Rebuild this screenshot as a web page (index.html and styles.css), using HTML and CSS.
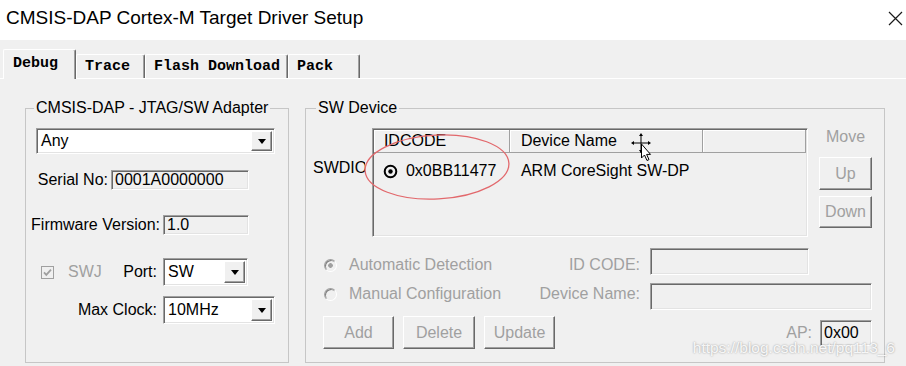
FILE: index.html
```html
<!DOCTYPE html>
<html lang="en">
<head>
    <meta charset="UTF-8">
    <meta name="viewport" content="width=device-width, initial-scale=1.0">
    <title>CMSIS-DAP Cortex-M Target Driver Setup</title>
    <link rel="stylesheet" href="styles.css">
</head>
<body>
    <div class="window">
        <div class="titlebar">
            <span class="title">CMSIS-DAP Cortex-M Target Driver Setup</span>
            <svg class="close" width="15" height="15" viewBox="0 0 15 15"><path d="M1 1 L14 14 M14 1 L1 14" stroke="#1a1a1a" stroke-width="1.2"/></svg>
        </div>

        <div class="tabs">
            <div class="tab tab-debug active">Debug</div>
            <div class="tab tab-trace">Trace</div>
            <div class="tab tab-flash">Flash Download</div>
            <div class="tab tab-pack">Pack</div>
        </div>

        <div class="panel">
            <fieldset class="group group-adapter">
                <legend>CMSIS-DAP - JTAG/SW Adapter</legend>
                <div class="combo combo-any"><span class="combo-value">Any</span><span class="combo-btn"></span></div>
                <div class="field-row serial-row">
                    <span class="field-label">Serial No:</span>
                    <div class="edit edit-serial">0001A0000000</div>
                </div>
                <div class="field-row firmware-row">
                    <span class="field-label">Firmware Version:</span>
                    <div class="edit edit-firmware">1.0</div>
                </div>
                <div class="port-grid">
                    <div class="port-label">
                        <svg class="check" width="13" height="13" viewBox="0 0 13 13"><rect x="0.5" y="0.5" width="12" height="12" fill="#f0f0f0" stroke="#a0a0a0"/><path d="M3 6.3 L5.3 8.8 L10 3.6" fill="none" stroke="#a0a0a0" stroke-width="1.8"/></svg>
                        <span class="disabled swj">SWJ</span>
                        <span class="port-text">Port:</span>
                    </div>
                    <div class="combo combo-port"><span class="combo-value">SW</span><span class="combo-btn"></span></div>
                    <div class="clock-label">Max Clock:</div>
                    <div class="combo combo-clock"><span class="combo-value">10MHz</span><span class="combo-btn"></span></div>
                </div>
            </fieldset>

            <fieldset class="group group-device">
                <legend>SW Device</legend>
                <div class="device-top">
                    <div class="swdio">SWDIO</div>
                    <div class="listview">
                        <div class="lv-header">
                            <div class="lv-col w-id">IDCODE</div>
                            <div class="lv-col w-name">Device Name</div>
                            <div class="lv-col w-rest"></div>
                        </div>
                        <div class="lv-row">
                            <div class="lv-cell w-id">
                                <svg width="15" height="15" viewBox="0 0 15 15"><circle cx="7.5" cy="7.5" r="5.8" fill="none" stroke="#000" stroke-width="2"/><circle cx="7.5" cy="7.5" r="2.2" fill="#000"/></svg>
                                <span>0x0BB11477</span>
                            </div>
                            <div class="lv-cell w-name">ARM CoreSight SW-DP</div>
                        </div>
                        <svg class="mark" width="152" height="72" viewBox="0 0 152 72"><ellipse cx="76" cy="36" rx="72" ry="32" transform="rotate(-3 76 36)" fill="none" stroke="#e2686c" stroke-width="1.3"/></svg>
                        <svg class="cursor" width="24" height="32" viewBox="0 0 24 32">
                            <path d="M10 2 V20 M2 10 H18" stroke="#000" stroke-width="1"/>
                            <path d="M10 0 L8 3 H12 Z M10 20 L8 17 H12 Z M0 10 L3 8 V12 Z M20 10 L17 8 V12 Z" fill="#000"/>
                            <path d="M10.5 11 L10.5 25 L13.5 22 L16 27.5 L18 26.6 L15.6 21.4 L19.5 21.4 Z" fill="#fff" stroke="#000" stroke-width="1"/>
                        </svg>
                    </div>
                    <div class="move-col">
                        <div class="disabled move-label">Move</div>
                        <div class="btn btn-up">Up</div>
                        <div class="btn btn-down">Down</div>
                    </div>
                </div>

                <div class="detect-row detect-auto">
                    <div class="detect-left">
                        <span class="radio checked"></span>
                        <span class="disabled">Automatic Detection</span>
                        <span class="disabled detect-label">ID CODE:</span>
                    </div>
                    <div class="edit edit-idcode"></div>
                </div>
                <div class="detect-row detect-manual">
                    <div class="detect-left">
                        <span class="radio"></span>
                        <span class="disabled">Manual Configuration</span>
                        <span class="disabled detect-label">Device Name:</span>
                    </div>
                    <div class="edit edit-devname"></div>
                </div>

                <div class="button-row">
                    <div class="btn btn-add">Add</div>
                    <div class="btn btn-delete">Delete</div>
                    <div class="btn btn-update">Update</div>
                    <div class="ap">
                        <span class="disabled">AP:</span>
                        <div class="edit edit-ap">0x00</div>
                    </div>
                </div>
            </fieldset>
        </div>

        <div class="watermark">https://blog.csdn.net/pq113_6</div>
    </div>
</body>
</html>
```

FILE: styles.css
```css
body {
    margin: 0;
    font-family: "Liberation Sans", Arial, sans-serif;
    font-size: 16px;
    line-height: 18px;
    background-color: #f0f0f0;
    color: #000;
}

.window {
    position: relative;
    width: 906px;
    height: 366px;
    overflow: hidden;
}

/* title bar */
.titlebar {
    height: 40px;
    box-sizing: border-box;
    background-color: #fff;
    display: flex;
    align-items: center;
    justify-content: space-between;
    padding: 0 3px 4px 6px;
}

.title {
    font-size: 19px;
    line-height: 22px;
}

/* tabs */
.tabs {
    display: flex;
    align-items: flex-end;
    height: 38px;
    padding-left: 3px;
    font-family: "Liberation Mono", "Courier New", monospace;
    font-weight: bold;
    font-size: 15px;
    line-height: 17px;
}

.tab {
    height: 24px;
    box-sizing: border-box;
    padding: 3px 0 0 8px;
    border-top: 1px solid #fff;
    border-left: 1px solid #fff;
    border-right: 1px solid #696969;
    box-shadow: inset -1px 0 #a0a0a0;
    border-radius: 2px 2px 0 0;
}

.tab.active {
    height: 30px;
    padding: 5px 0 0 9px;
    margin-bottom: -1px;
    background-color: #f0f0f0;
    position: relative;
    z-index: 1;
}

.tab-debug { width: 73px; }
.tab-trace { width: 69px; }
.tab-flash { width: 143px; }
.tab-pack { width: 72px; }

/* panel */
.panel {
    border-top: 1px solid #fff;
    display: flex;
    gap: 16px;
    padding: 20px 0 0 25px;
}

.group {
    margin: 0;
    padding: 0 13px 0 10px;
    border: 1px solid #c6c6c6;
    height: 264px;
    box-sizing: border-box;
    min-width: 0;
}

.group legend {
    padding: 0 2px;
    margin-left: -2px;
}

.group-adapter { width: 264px; }

.group-device {
    width: 580px;
    padding: 0 12px 0 7px;
}

.group-device legend { margin-left: 3px; }

.disabled { color: #a0a0a0; }

/* controls */
.edit {
    height: 20px;
    box-sizing: border-box;
    flex-shrink: 0;
    border: 1px solid;
    border-color: #a0a0a0 #fff #fff #a0a0a0;
    box-shadow: inset 1px 1px #696969, inset -1px -1px #e3e3e3;
    padding: 0 3px;
    display: flex;
    align-items: center;
}

.combo {
    display: flex;
    box-sizing: border-box;
    background-color: #fff;
    border: 1px solid;
    border-color: #a0a0a0 #fff #fff #a0a0a0;
    box-shadow: inset 1px 1px #696969, inset -1px -1px #e3e3e3;
    padding: 2px;
}

.combo-value {
    flex: 1;
    align-self: center;
    padding-left: 2px;
}

.combo-btn {
    width: 21px;
    box-sizing: border-box;
    display: flex;
    align-items: center;
    justify-content: center;
    background-color: #f0f0f0;
    border: 1px solid;
    border-color: #fff #696969 #696969 #fff;
    box-shadow: inset -1px -1px #a0a0a0;
}

.combo-btn::before {
    content: "";
    border-left: 4px solid transparent;
    border-right: 4px solid transparent;
    border-top: 5px solid #000;
}

.btn {
    height: 33px;
    box-sizing: border-box;
    border: 1px solid;
    border-color: #fff #696969 #696969 #fff;
    box-shadow: inset -1px -1px #a0a0a0;
    display: flex;
    align-items: center;
    justify-content: center;
    color: #a0a0a0;
}

.radio {
    width: 13px;
    height: 13px;
    box-sizing: border-box;
    border-radius: 50%;
    border: 1px solid;
    border-color: #a0a0a0 #fff #fff #a0a0a0;
    box-shadow: inset 1px 1px #808080;
    background-color: #f0f0f0;
    margin-right: 12px;
}

.radio.checked {
    background: radial-gradient(circle, #a0a0a0 0 2px, #f0f0f0 2.6px);
}

/* adapter group */
.combo-any {
    margin-top: 11px;
    width: 239px;
    height: 26px;
}

.field-row {
    display: flex;
    align-items: center;
    justify-content: flex-end;
    gap: 3px;
    padding-right: 26px;
}

.field-label { white-space: nowrap; }

.serial-row { margin-top: 16px; }
.firmware-row { margin-top: 25px; }

.edit-serial { width: 138px; }
.edit-firmware { width: 86px; }

.port-grid {
    display: grid;
    grid-template-columns: 121px auto;
    column-gap: 6px;
    row-gap: 10px;
    align-items: center;
    margin-top: 23px;
}

.port-label {
    display: flex;
    align-items: center;
    padding-left: 5px;
}

.swj { margin-left: 14px; }
.port-text { margin-left: auto; }
.clock-label { text-align: right; }

.combo-port { width: 85px; height: 28px; }
.combo-clock { width: 112px; height: 28px; }

/* device group */
.device-top {
    display: flex;
    align-items: flex-start;
    margin-top: 11px;
}

.swdio {
    width: 52px;
    overflow: hidden;
    white-space: nowrap;
    margin-top: 31px;
}

.listview {
    position: relative;
    width: 437px;
    height: 109px;
    box-sizing: border-box;
    margin-left: 7px;
    padding: 1px;
    border: 1px solid;
    border-color: #a0a0a0 #fff #fff #a0a0a0;
    box-shadow: inset 1px 1px #696969, inset -1px -1px #e3e3e3;
}

.lv-header {
    display: flex;
    height: 23px;
}

.lv-col {
    box-sizing: border-box;
    padding-left: 10px;
    line-height: 22px;
    border-right: 1px solid #a0a0a0;
    border-bottom: 1px solid #a0a0a0;
    box-shadow: inset 1px 1px #fff;
}

.w-id { width: 136px; }
.w-name { width: 193px; }
.w-rest { flex: 1; }

.lv-col.w-name { padding-left: 11px; }

.lv-row {
    display: flex;
    align-items: center;
    height: 22px;
    margin-top: 7px;
}

.lv-cell.w-id {
    box-sizing: border-box;
    display: flex;
    align-items: center;
    gap: 8px;
    padding-left: 9px;
}

.lv-cell.w-name {
    box-sizing: border-box;
    padding-left: 11px;
}

.mark {
    position: absolute;
    left: -12px;
    top: 2px;
}

.cursor {
    position: absolute;
    left: 258px;
    top: 4px;
}

.move-col {
    display: flex;
    flex-direction: column;
    width: 53px;
    margin-left: 11px;
}

.move-label { text-align: center; }

.btn-up { margin-top: 11px; }
.btn-down { margin-top: 6px; height: 32px; }

.detect-row {
    display: flex;
    align-items: center;
    height: 27px;
}

.detect-auto { margin-top: 11px; }
.detect-manual { margin-top: 8px; }

.detect-left {
    width: 327px;
    box-sizing: border-box;
    display: flex;
    align-items: center;
    padding-left: 11px;
}

.detect-auto .detect-left { margin-top: 7px; }
.detect-manual .detect-left { margin-bottom: 5px; }

.detect-label { margin-left: auto; }

.detect-row .edit {
    height: 27px;
    margin-left: 10px;
}

.edit-idcode { width: 159px; }
.edit-devname { flex: 1; }

.button-row {
    display: flex;
    align-items: center;
    gap: 9px;
    margin-top: 6px;
    padding-left: 10px;
}

.btn-add { width: 71px; }
.btn-delete { width: 72px; }
.btn-update { width: 71px; }

.ap {
    margin-left: auto;
    display: flex;
    align-items: center;
    gap: 8px;
}

.edit-ap {
    width: 52px;
    height: 26px;
}

.watermark {
    position: absolute;
    right: 11px;
    bottom: 9px;
    font-size: 15.5px;
    color: rgba(255, 255, 255, 0.9);
    text-shadow: 0 0 2px rgba(0, 0, 0, 0.4);
}
```
